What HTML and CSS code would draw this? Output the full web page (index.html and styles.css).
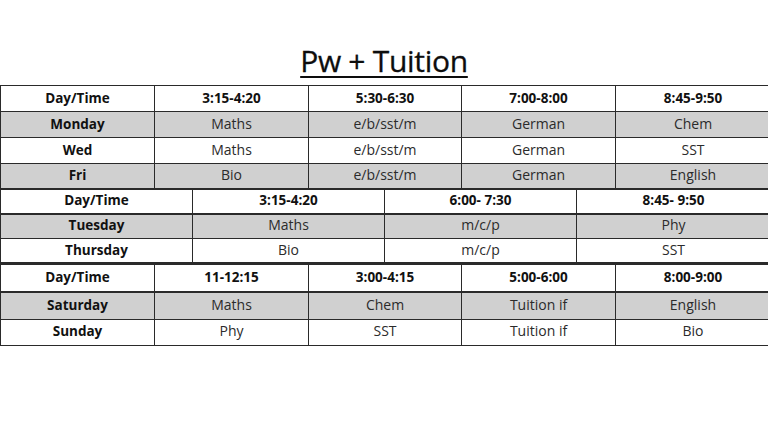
FILE: index.html
```html
<!DOCTYPE html>
<html>
<head>
<meta charset="utf-8">
<link rel="stylesheet" href="styles.css">
</head>
<body>
<div class="page">
  <div class="title"><span>Pw + Tuition</span></div>
  <table class="tt five">
    <colgroup><col class="c154"><col class="c154"><col class="c153"><col class="c154"><col class="c155"></colgroup>
    <tr class="h26 head"><td>Day/Time</td><td>3:15-4:20</td><td>5:30-6:30</td><td>7:00-8:00</td><td>8:45-9:50</td></tr>
    <tr class="h26 grey"><th>Monday</th><td>Maths</td><td>e/b/sst/m</td><td>German</td><td>Chem</td></tr>
    <tr class="h26"><th>Wed</th><td>Maths</td><td>e/b/sst/m</td><td>German</td><td>SST</td></tr>
    <tr class="h25 grey"><th>Fri</th><td>Bio</td><td>e/b/sst/m</td><td>German</td><td>English</td></tr>
  </table>
  <table class="tt four">
    <colgroup><col class="c192"><col class="c192"><col class="c192"><col class="c194"></colgroup>
    <tr class="h24 head"><td>Day/Time</td><td>3:15-4:20</td><td>6:00- 7:30</td><td>8:45- 9:50</td></tr>
    <tr class="h25 grey thick"><th>Tuesday</th><td>Maths</td><td>m/c/p</td><td>Phy</td></tr>
    <tr class="h24"><th>Thursday</th><td>Bio</td><td>m/c/p</td><td>SST</td></tr>
  </table>
  <table class="tt five">
    <colgroup><col class="c154"><col class="c154"><col class="c153"><col class="c154"><col class="c155"></colgroup>
    <tr class="h28 head thick"><td>Day/Time</td><td>11-12:15</td><td>3:00-4:15</td><td>5:00-6:00</td><td>8:00-9:00</td></tr>
    <tr class="h27 grey thick"><th>Saturday</th><td>Maths</td><td>Chem</td><td>Tuition if</td><td>English</td></tr>
    <tr class="h26"><th>Sunday</th><td>Phy</td><td>SST</td><td>Tuition if</td><td>Bio</td></tr>
  </table>
</div>
</body>
</html>
```
FILE: styles.css
```css
html, body {
  margin: 0;
  padding: 0;
  background: #ffffff;
  overflow: hidden;
}
.page {
  width: 768px;
  height: 433px;
  overflow: hidden;
  font-family: "Open Sans", "Liberation Sans", sans-serif;
  color: #2b2b2b;
}
.title {
  height: 85px;
  display: flex;
  justify-content: center;
  align-items: flex-end;
}
.title span {
  font-size: 30px;
  line-height: 36px;
  color: #0d0d0d;
  text-decoration: underline;
  text-decoration-thickness: 2px;
  text-underline-offset: 4px;
  margin-bottom: 6px;
  letter-spacing: -0.3px;
  -webkit-text-stroke: 0.3px #0d0d0d;
}
.tt {
  border-collapse: collapse;
  table-layout: fixed;
  width: 770px;
}
.tt td, .tt th {
  border: 1px solid #2a2a2a;
  padding: 0 0 2px 0;
  text-align: center;
  vertical-align: middle;
  font-size: 14px;
  font-weight: 400;
  line-height: 16px;
  white-space: nowrap;
}
.tt th, .tt .head td {
  font-size: 13.5px;
  font-weight: 700;
  color: #111;
}
.tt tr.grey td, .tt tr.grey th {
  background: #d0d0d0;
}
.tt tr.thick td, .tt tr.thick th {
  border-top: 2px solid #2a2a2a;
}
.c154 { width: 154px; }
.c153 { width: 153px; }
.c155 { width: 155px; }
.c192 { width: 192px; }
.c194 { width: 194px; }
.h24 { height: 24px; }
.h25 { height: 25px; }
.h26 { height: 26px; }
.h27 { height: 27px; }
.h28 { height: 28px; }
```
